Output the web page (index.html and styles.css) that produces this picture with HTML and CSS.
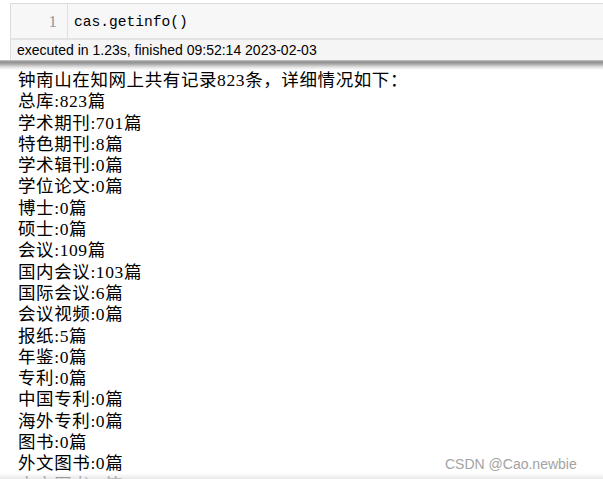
FILE: index.html
```html
<!DOCTYPE html>
<html lang="zh">
<head>
<meta charset="utf-8">
<link rel="stylesheet" href="styles.css">
</head>
<body>
<div class="cell">
  <div class="input">
    <div class="gutter">1</div>
    <div class="code">cas.getinfo()</div>
  </div>
  <div class="exec">executed in 1.23s, finished 09:52:14 2023-02-03</div>
</div>
<div class="shadow"></div>
<div class="output">
  <div>钟南山在知网上共有记录823条，详细情况如下：</div>
  <div>总库:823篇</div>
  <div>学术期刊:701篇</div>
  <div>特色期刊:8篇</div>
  <div>学术辑刊:0篇</div>
  <div>学位论文:0篇</div>
  <div>博士:0篇</div>
  <div>硕士:0篇</div>
  <div>会议:109篇</div>
  <div>国内会议:103篇</div>
  <div>国际会议:6篇</div>
  <div>会议视频:0篇</div>
  <div>报纸:5篇</div>
  <div>年鉴:0篇</div>
  <div>专利:0篇</div>
  <div>中国专利:0篇</div>
  <div>海外专利:0篇</div>
  <div>图书:0篇</div>
  <div>外文图书:0篇</div>
  <div>中文图书:0篇</div>
</div>
<div class="watermark">CSDN @Cao.newbie</div>
<div class="bottomfade"></div>
</body>
</html>
```
FILE: styles.css
```css
html, body {
  margin: 0;
  padding: 0;
  background: #fff;
  overflow: hidden;
  height: 479px;
}
.cell {
  margin: 3px 0 0 10px;
  border: 1px solid #dcdcdc;
  border-right: none;
  background: #f7f7f7;
  height: 57px;
  box-sizing: border-box;
}
.input {
  display: flex;
  height: 36px;
  border-bottom: 2px solid #e3e3e3;
  box-sizing: border-box;
}
.gutter {
  width: 57px;
  box-sizing: border-box;
  padding-right: 10px;
  text-align: right;
  border-right: 1px solid #e0e0e0;
  font-family: "Liberation Serif", serif;
  font-size: 17px;
  color: #999;
  line-height: 36px;
}
.code {
  padding-left: 6px;
  font-family: "Liberation Mono", monospace;
  font-size: 14.6px;
  line-height: 36px;
  color: #000;
}
.exec {
  font-family: "Liberation Sans", Arial, sans-serif;
  font-size: 14px;
  line-height: 20px;
  padding-left: 6px;
  color: #000;
  background: #f5f5f5;
}
.shadow {
  height: 10px;
  background: linear-gradient(to bottom, #c8c8c8 0px, #8e8e8e 2px, #a8a8a8 4px, #e0e0e0 7px, #ffffff 10px);
}
.output {
  padding-left: 18px;
  font-family: "Liberation Serif", "Noto Sans CJK SC", serif;
  font-size: 17.5px;
  line-height: 21.3px;
  letter-spacing: 0.6px;
  color: #000;
}
.watermark {
  position: absolute;
  left: 445px;
  top: 456px;
  font-family: "Liberation Sans", Arial, sans-serif;
  font-size: 14px;
  color: #a3a3a3;
}
.bottomfade {
  position: absolute;
  left: 0;
  right: 0;
  top: 473px;
  height: 6px;
  background: linear-gradient(to bottom, rgba(255,255,255,0), rgba(230,230,230,0.9));
}
```
